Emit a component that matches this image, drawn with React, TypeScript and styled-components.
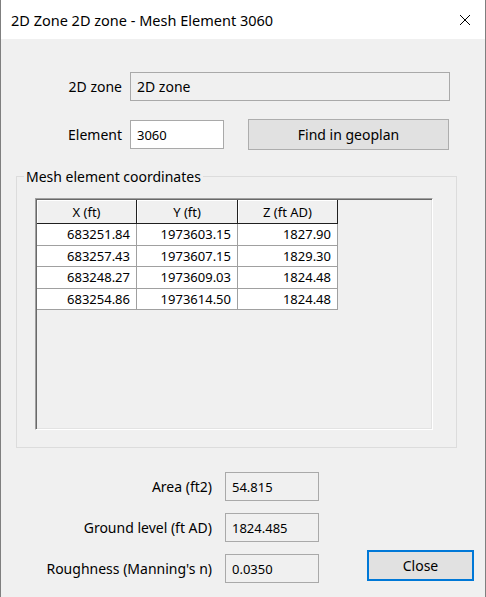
import React from 'react';
import styled, { createGlobalStyle } from 'styled-components';

const GlobalStyle = createGlobalStyle`
  html, body {
    margin: 0;
    padding: 0;
    background: #f0f0f0;
  }
  * {
    box-sizing: border-box;
  }
`;

const Window = styled.div`
  width: 486px;
  height: 597px;
  display: flex;
  flex-direction: column;
  border-left: 1px solid #7f7f7f;
  border-right: 1px solid #7f7f7f;
  font-family: "Noto Sans", "Open Sans", sans-serif;
  font-size: 14px;
  color: #000;
  overflow: hidden;
`;

const TitleBar = styled.div`
  height: 39px;
  flex: none;
  background: #fff;
  display: flex;
  align-items: center;
  justify-content: space-between;
  padding: 0 14px 0 10px;
  font-size: 14.5px;
`;

const CloseGlyph = styled.svg`
  width: 12px;
  height: 12px;
`;

const Body = styled.div`
  flex: 1;
  background: #f0f0f0;
  display: flex;
  flex-direction: column;
  padding: 33px 0 0 0;
`;

const FieldRow = styled.div<{ $gap?: number }>`
  display: flex;
  align-items: center;
  margin-bottom: ${(p) => p.$gap ?? 0}px;
`;

const Label = styled.div<{ $width: number }>`
  width: ${(p) => p.$width}px;
  text-align: right;
  white-space: nowrap;
  flex: none;
`;

const TextBox = styled.div<{ $width: number; $readOnly?: boolean; $offset?: number; $size?: number }>`
  width: ${(p) => p.$width}px;
  height: 29px;
  margin-left: ${(p) => p.$offset ?? 8}px;
  border: 1px solid #a9a9a9;
  background: ${(p) => (p.$readOnly ? '#f0f0f0' : '#fff')};
  display: flex;
  align-items: center;
  padding-left: 6px;
  font-size: ${(p) => p.$size ?? 13}px;
  flex: none;
`;

const Spacer = styled.div<{ $width: number }>`
  width: ${(p) => p.$width}px;
  flex: none;
`;

const Button = styled.button<{ $width: number; $focused?: boolean }>`
  width: ${(p) => p.$width}px;
  height: 31px;
  background: #e1e1e1;
  border: ${(p) => (p.$focused ? '2px solid #0078d7' : '1px solid #adadad')};
  font-family: inherit;
  font-size: 14px;
  color: #000;
  padding: 0;
  flex: none;
`;

const GroupBox = styled.section`
  margin: 26px 28px 0 15px;
  height: 272px;
  border: 1px solid #dcdcdc;
  display: flex;
  flex-direction: column;
  align-items: flex-start;
`;

const GroupTitle = styled.div`
  margin: -10px 0 0 7px;
  padding: 0 2px;
  line-height: 19px;
  background: #f0f0f0;
  font-size: 14px;
`;

const ListView = styled.div`
  width: 398px;
  height: 232px;
  margin: 12px 0 0 18px;
  border: 1px solid;
  border-color: #a0a0a0 #fff #fff #a0a0a0;
  box-shadow: inset 1px 1px #696969, inset -1px -1px #e3e3e3;
  padding: 1px;
  background: #f0f0f0;
  font-size: 13px;
`;

const Grid = styled.div`
  display: grid;
  grid-template-columns: 100px 101px 100px;
`;

const HeadCell = styled.div`
  height: 24px;
  display: flex;
  align-items: center;
  justify-content: center;
  background: #f0f0f0;
  border-right: 1px solid #202020;
  border-bottom: 1px solid #202020;
  box-shadow: inset 1px 1px #fff;
`;

const Cell = styled.div`
  height: 21.5px;
  display: flex;
  align-items: center;
  justify-content: flex-end;
  padding-right: 6px;
  background: #fff;
  border-right: 1px solid #a0a0a0;
  border-bottom: 1px solid #a0a0a0;
`;

const Bottom = styled.div`
  display: flex;
  align-items: flex-end;
  margin-top: 24px;
`;

const Props = styled.div`
  display: flex;
  flex-direction: column;
  gap: 12px;
`;

const CloseWrap = styled.div`
  margin-left: 48px;
  margin-bottom: 2px;
`;

const rows = [
  ['683251.84', '1973603.15', '1827.90'],
  ['683257.43', '1973607.15', '1829.30'],
  ['683248.27', '1973609.03', '1824.48'],
  ['683254.86', '1973614.50', '1824.48'],
];

const App: React.FC = () => {
  return (
    <>
      <GlobalStyle />
      <Window>
        <TitleBar>
          <span>2D Zone 2D zone - Mesh Element 3060</span>
          <CloseGlyph viewBox="0 0 12 12">
            <path d="M1 1 L11 11 M11 1 L1 11" stroke="#000" strokeWidth="1" fill="none" />
          </CloseGlyph>
        </TitleBar>
        <Body>
          <FieldRow $gap={18}>
            <Label $width={121}>2D zone</Label>
            <TextBox $width={320} $readOnly $size={14}>2D zone</TextBox>
          </FieldRow>
          <FieldRow>
            <Label $width={121}>Element</Label>
            <TextBox $width={94}>3060</TextBox>
            <Spacer $width={24} />
            <Button $width={201}>Find in geoplan</Button>
          </FieldRow>
          <GroupBox>
            <GroupTitle>Mesh element coordinates</GroupTitle>
            <ListView>
              <Grid>
                <HeadCell>X (ft)</HeadCell>
                <HeadCell>Y (ft)</HeadCell>
                <HeadCell>Z (ft AD)</HeadCell>
                {rows.map((r) =>
                  r.map((v, i) => <Cell key={r[0] + i}>{v}</Cell>)
                )}
              </Grid>
            </ListView>
          </GroupBox>
          <Bottom>
            <Props>
              <FieldRow>
                <Label $width={211}>Area (ft2)</Label>
                <TextBox $width={94} $readOnly $offset={13}>54.815</TextBox>
              </FieldRow>
              <FieldRow>
                <Label $width={211}>Ground level (ft AD)</Label>
                <TextBox $width={94} $readOnly $offset={13}>1824.485</TextBox>
              </FieldRow>
              <FieldRow>
                <Label $width={211}>Roughness (Manning's n)</Label>
                <TextBox $width={94} $readOnly $offset={13}>0.0350</TextBox>
              </FieldRow>
            </Props>
            <CloseWrap>
              <Button $width={107} $focused>Close</Button>
            </CloseWrap>
          </Bottom>
        </Body>
      </Window>
    </>
  );
};

export default App;
